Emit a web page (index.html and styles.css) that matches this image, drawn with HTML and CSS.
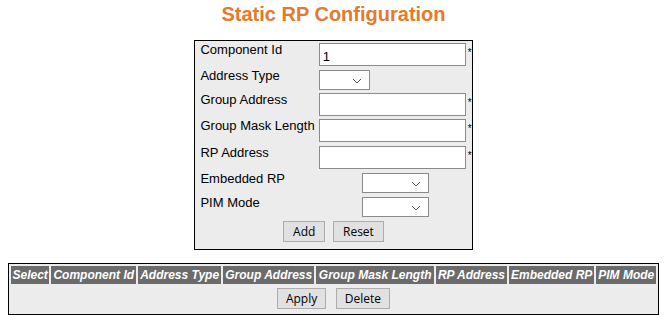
FILE: index.html
```html
<!DOCTYPE html>
<html lang="en">
<head>
  <meta charset="UTF-8">
  <title>Static RP Configuration</title>
  <link rel="stylesheet" href="styles.css">
</head>
<body>
<h1 class="page-title">Static RP Configuration</h1>

<table class="config-form">
  <tr>
    <td class="lbl">Component Id</td>
    <td class="fld"><input type="text" class="txt" value="1"><span class="req">*</span></td>
  </tr>
  <tr>
    <td class="lbl">Address Type</td>
    <td class="fld"><span class="sel sel-small"><select></select><svg viewBox="0 0 10 6" width="10" height="6"><path d="M1 1 L5 5 L9 1" fill="none" stroke="#555" stroke-width="1"/></svg></span></td>
  </tr>
  <tr>
    <td class="lbl">Group Address</td>
    <td class="fld"><input type="text" class="txt"><span class="req">*</span></td>
  </tr>
  <tr>
    <td class="lbl">Group Mask Length</td>
    <td class="fld"><input type="text" class="txt"><span class="req">*</span></td>
  </tr>
  <tr class="row-rp">
    <td class="lbl">RP Address</td>
    <td class="fld"><input type="text" class="txt"><span class="req">*</span></td>
  </tr>
  <tr>
    <td class="lbl">Embedded RP</td>
    <td class="fld center"><span class="sel sel-wide"><select></select><svg viewBox="0 0 10 6" width="10" height="6"><path d="M1 1 L5 5 L9 1" fill="none" stroke="#555" stroke-width="1"/></svg></span></td>
  </tr>
  <tr>
    <td class="lbl">PIM Mode</td>
    <td class="fld center"><span class="sel sel-wide"><select></select><svg viewBox="0 0 10 6" width="10" height="6"><path d="M1 1 L5 5 L9 1" fill="none" stroke="#555" stroke-width="1"/></svg></span></td>
  </tr>
  <tr>
    <td colspan="2" class="btn-row">
      <button class="btn">Add</button>
      <button class="btn">Reset</button>
    </td>
  </tr>
</table>

<table class="list-table">
  <tr>
    <th>Select</th>
    <th>Component Id</th>
    <th>Address Type</th>
    <th>Group Address</th>
    <th>Group Mask Length</th>
    <th>RP Address</th>
    <th>Embedded RP</th>
    <th>PIM Mode</th>
  </tr>
  <tr>
    <td colspan="8" class="btn-row">
      <button class="btn">Apply</button>
      <button class="btn">Delete</button>
    </td>
  </tr>
</table>
</body>
</html>
```

FILE: styles.css
```css
body{
  margin: 0 8px 8px;
  font-family: "Liberation Sans", Arial, sans-serif;
  font-size: 13px;
  color: #000;
  background: #fff;
}
.page-title{
  margin: 2px 0 14px;
  text-align: center;
  font-size: 20px;
  font-weight: bold;
  color: #e47a2c;
  line-height: 24px;
}
.config-form{
  margin: 0 auto;
  width: 278px;
  background: #ececec;
  border: 1px solid #000;
  border-collapse: separate;
  border-spacing: 0;
  padding: 0 0 5px;
}
.config-form td{
  padding: 0;
  vertical-align: top;
}
.config-form .lbl{
  padding: 1px 4px 0 5px;
  white-space: nowrap;
  width: 112px;
}
.config-form .fld{
  padding: 2px 0 1px;
  white-space: nowrap;
}
.config-form .row-rp .fld{
  padding-top: 3px;
}
.config-form .row-rp .lbl{
  padding-top: 2px;
}
.center{
  text-align: center;
}
.txt{
  box-sizing: border-box;
  width: 147px;
  height: 23px;
  margin: 0;
  padding: 3px 3px 0;
  border: 1px solid #8a8a8a;
  background: #fff;
  font-family: "Liberation Sans", Arial, sans-serif;
  font-size: 13px;
  vertical-align: top;
}
.req{
  display: inline-block;
  font-family: "Liberation Sans", Arial, sans-serif;
  font-size: 10px;
  line-height: 10px;
  color: #000;
  margin: 5px 0 0 2px;
  vertical-align: top;
}
.sel{
  position: relative;
  display: inline-block;
  vertical-align: top;
  margin-top: 1px;
}
.sel select{
  appearance: none;
  -webkit-appearance: none;
  box-sizing: border-box;
  display: block;
  height: 20px;
  margin: 0;
  border: 1px solid #8a8a8a;
  border-radius: 0;
  background: #fff;
}
.sel-small select{
  width: 51px;
}
.sel-wide select{
  width: 67px;
}
.sel svg{
  position: absolute;
  right: 8px;
  top: 8px;
}
.btn-row{
  text-align: center;
  padding: 3px 0 2px !important;
}
.btn{
  height: 21px;
  margin: 0 2px;
  padding: 0 9px;
  border: 1px solid #adadad;
  background: #e1e1e1;
  font-family: "Open Sans", "Noto Sans", sans-serif;
  font-size: 12px;
  color: #000;
  line-height: 19px;
}
.list-table{
  width: 100%;
  margin-top: 13px;
  background: #ececec;
  border: 1px solid #000;
  border-spacing: 2px;
}
.list-table th{
  background: #6b6b6b;
  color: #fff;
  font-style: italic;
  font-weight: bold;
  font-size: 12px;
  padding: 2px 1px;
  white-space: nowrap;
  text-align: center;
}
.list-table .btn-row{
  padding: 2px 0 3px !important;
}
.list-table .btn{
  margin: 0 3px;
  padding: 0 8px;
}
```
